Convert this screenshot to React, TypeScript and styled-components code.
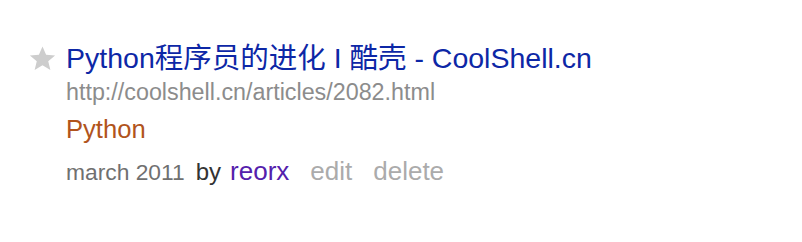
import React from 'react';
import styled, { createGlobalStyle } from 'styled-components';

const GlobalStyle = createGlobalStyle`
  html, body {
    margin: 0;
    padding: 0;
    background: #ffffff;
  }
  body {
    font-family: "Liberation Sans", Arial, "Noto Sans CJK SC", sans-serif;
  }
`;

const Page = styled.div`
  padding: 38px 0 0 29px;
`;

const Entry = styled.div`
  display: flex;
  align-items: flex-start;
  gap: 10px;
`;

const StarBox = styled.div`
  width: 27px;
  padding-top: 7px;
  flex-shrink: 0;
`;

const Body = styled.div`
  display: flex;
  flex-direction: column;
`;

const Title = styled.a`
  font-size: 28.5px;
  line-height: 40px;
  color: #0d27a6;
  text-decoration: none;
`;

const Url = styled.div`
  margin-top: -2px;
  font-size: 23.3px;
  line-height: 32px;
  color: #8c8c8c;
`;

const Tag = styled.a`
  margin-top: 2px;
  font-size: 25.6px;
  line-height: 38px;
  color: #b1541c;
  text-decoration: none;
`;

const Meta = styled.div`
  margin-top: 6px;
  display: flex;
  align-items: baseline;
  line-height: 34px;
`;

const DateText = styled.span`
  font-size: 22.8px;
  color: #707070;
`;

const By = styled.span`
  font-size: 24px;
  color: #333333;
  margin-left: 11px;
`;

const Author = styled.a`
  font-size: 26px;
  color: #5420ac;
  margin-left: 9px;
  text-decoration: none;
`;

const Action = styled.a`
  font-size: 26px;
  color: #ababab;
  margin-left: 21px;
  text-decoration: none;
`;

const Star = () => (
  <svg width="27" height="27" viewBox="0 0 24 23">
    <path
      d="M12 0.8l3.2 7.4 8 0.6-6.1 5.2 1.9 7.8L12 17.6l-7 4.2 1.9-7.8L0.8 8.8l8-0.6z"
      fill="#cdcdcd"
    />
  </svg>
);

export default function App() {
  return (
    <>
      <GlobalStyle />
      <Page>
        <Entry>
          <StarBox>
            <Star />
          </StarBox>
          <Body>
            <Title href="#">Python程序员的进化 I 酷壳 - CoolShell.cn</Title>
            <Url>http://coolshell.cn/articles/2082.html</Url>
            <Tag href="#">Python</Tag>
            <Meta>
              <DateText>march 2011</DateText>
              <By>by</By>
              <Author href="#">reorx</Author>
              <Action href="#">edit</Action>
              <Action href="#">delete</Action>
            </Meta>
          </Body>
        </Entry>
      </Page>
    </>
  );
}
